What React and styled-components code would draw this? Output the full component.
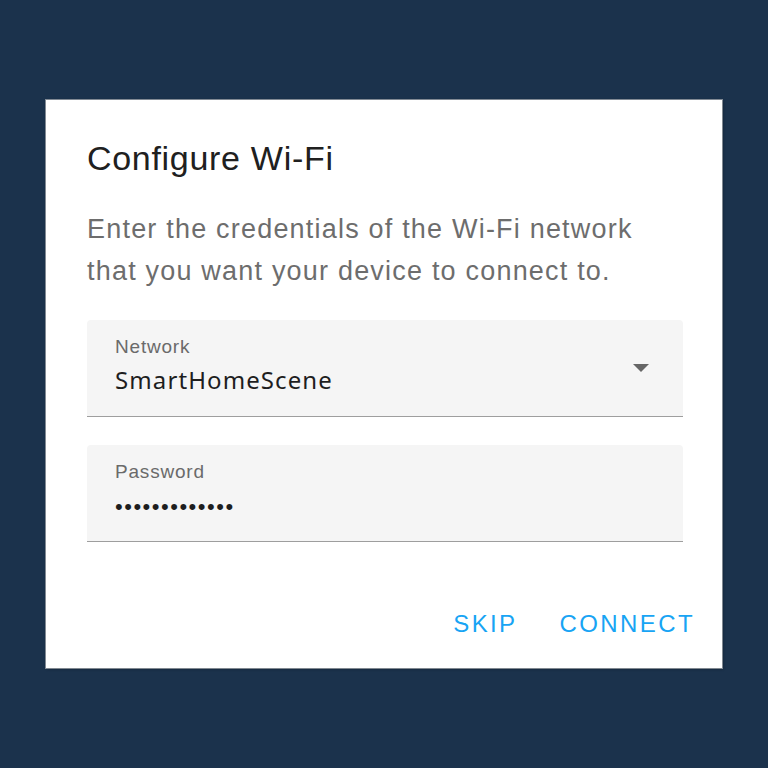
import React from 'react';
import styled, { createGlobalStyle } from 'styled-components';

const GlobalStyle = createGlobalStyle`
  html, body {
    margin: 0;
    padding: 0;
    background: #1b324c;
  }
  body {
    font-family: "Liberation Sans", Arial, sans-serif;
  }
`;

const Page = styled.div`
  width: 768px;
  height: 768px;
  padding: 100px 0 0 46px;
  box-sizing: border-box;
`;

const Dialog = styled.div`
  width: 676px;
  height: 568px;
  box-sizing: border-box;
  background: #ffffff;
  box-shadow: 0 0 0 1px rgba(200, 200, 200, 0.6), 1px 1px 3px rgba(0, 0, 0, 0.3);
  padding: 38px 39px 26px 41px;
  display: flex;
  flex-direction: column;
`;

const Title = styled.h1`
  margin: 0;
  font-size: 34px;
  line-height: 40px;
  font-weight: 400;
  letter-spacing: 0.7px;
  color: #202020;
`;

const Text = styled.p`
  margin: 30px 0 0;
  font-size: 27px;
  line-height: 42px;
  color: #6d6d6d;
  letter-spacing: 1.2px;
`;

const Field = styled.div`
  position: relative;
  height: 97px;
  box-sizing: border-box;
  margin-top: 28px;
  padding: 17px 28px 0;
  background: #f5f5f5;
  border-radius: 4px 4px 0 0;
  border-bottom: 1px solid #9e9e9e;
`;

const Label = styled.div`
  font-size: 19px;
  line-height: 20px;
  letter-spacing: 0.8px;
  color: #6a6a6a;
`;

const Value = styled.div`
  margin-top: 8px;
  font-family: "Noto Sans", "Open Sans", sans-serif;
  font-size: 24px;
  line-height: 30px;
  letter-spacing: 1.1px;
  color: #1e1e1e;
`;

const Dots = styled.div`
  margin-top: 10px;
  font-size: 22px;
  line-height: 30px;
  letter-spacing: 1.5px;
  color: #1e1e1e;
`;

const Arrow = styled.div`
  position: absolute;
  right: 34px;
  top: 44px;
  width: 0;
  height: 0;
  border-left: 8px solid transparent;
  border-right: 8px solid transparent;
  border-top: 8px solid #666;
`;

const Actions = styled.div`
  margin: auto -12px 0 0;
  display: flex;
  justify-content: flex-end;
  gap: 42px;
`;

const Button = styled.button`
  background: none;
  border: none;
  padding: 0;
  font-family: "Liberation Sans", Arial, sans-serif;
  font-size: 24px;
  line-height: 36px;
  letter-spacing: 2.4px;
  color: #18a4f4;
  cursor: pointer;
`;

export default function App() {
  return (
    <Page>
      <GlobalStyle />
      <Dialog>
        <Title>Configure Wi-Fi</Title>
        <Text>
          Enter the credentials of the Wi-Fi network
          <br />
          that you want your device to connect to.
        </Text>
        <Field>
          <Label>Network</Label>
          <Value>SmartHomeScene</Value>
          <Arrow />
        </Field>
        <Field>
          <Label>Password</Label>
          <Dots>•••••••••••••</Dots>
        </Field>
        <Actions>
          <Button>SKIP</Button>
          <Button>CONNECT</Button>
        </Actions>
      </Dialog>
    </Page>
  );
}
